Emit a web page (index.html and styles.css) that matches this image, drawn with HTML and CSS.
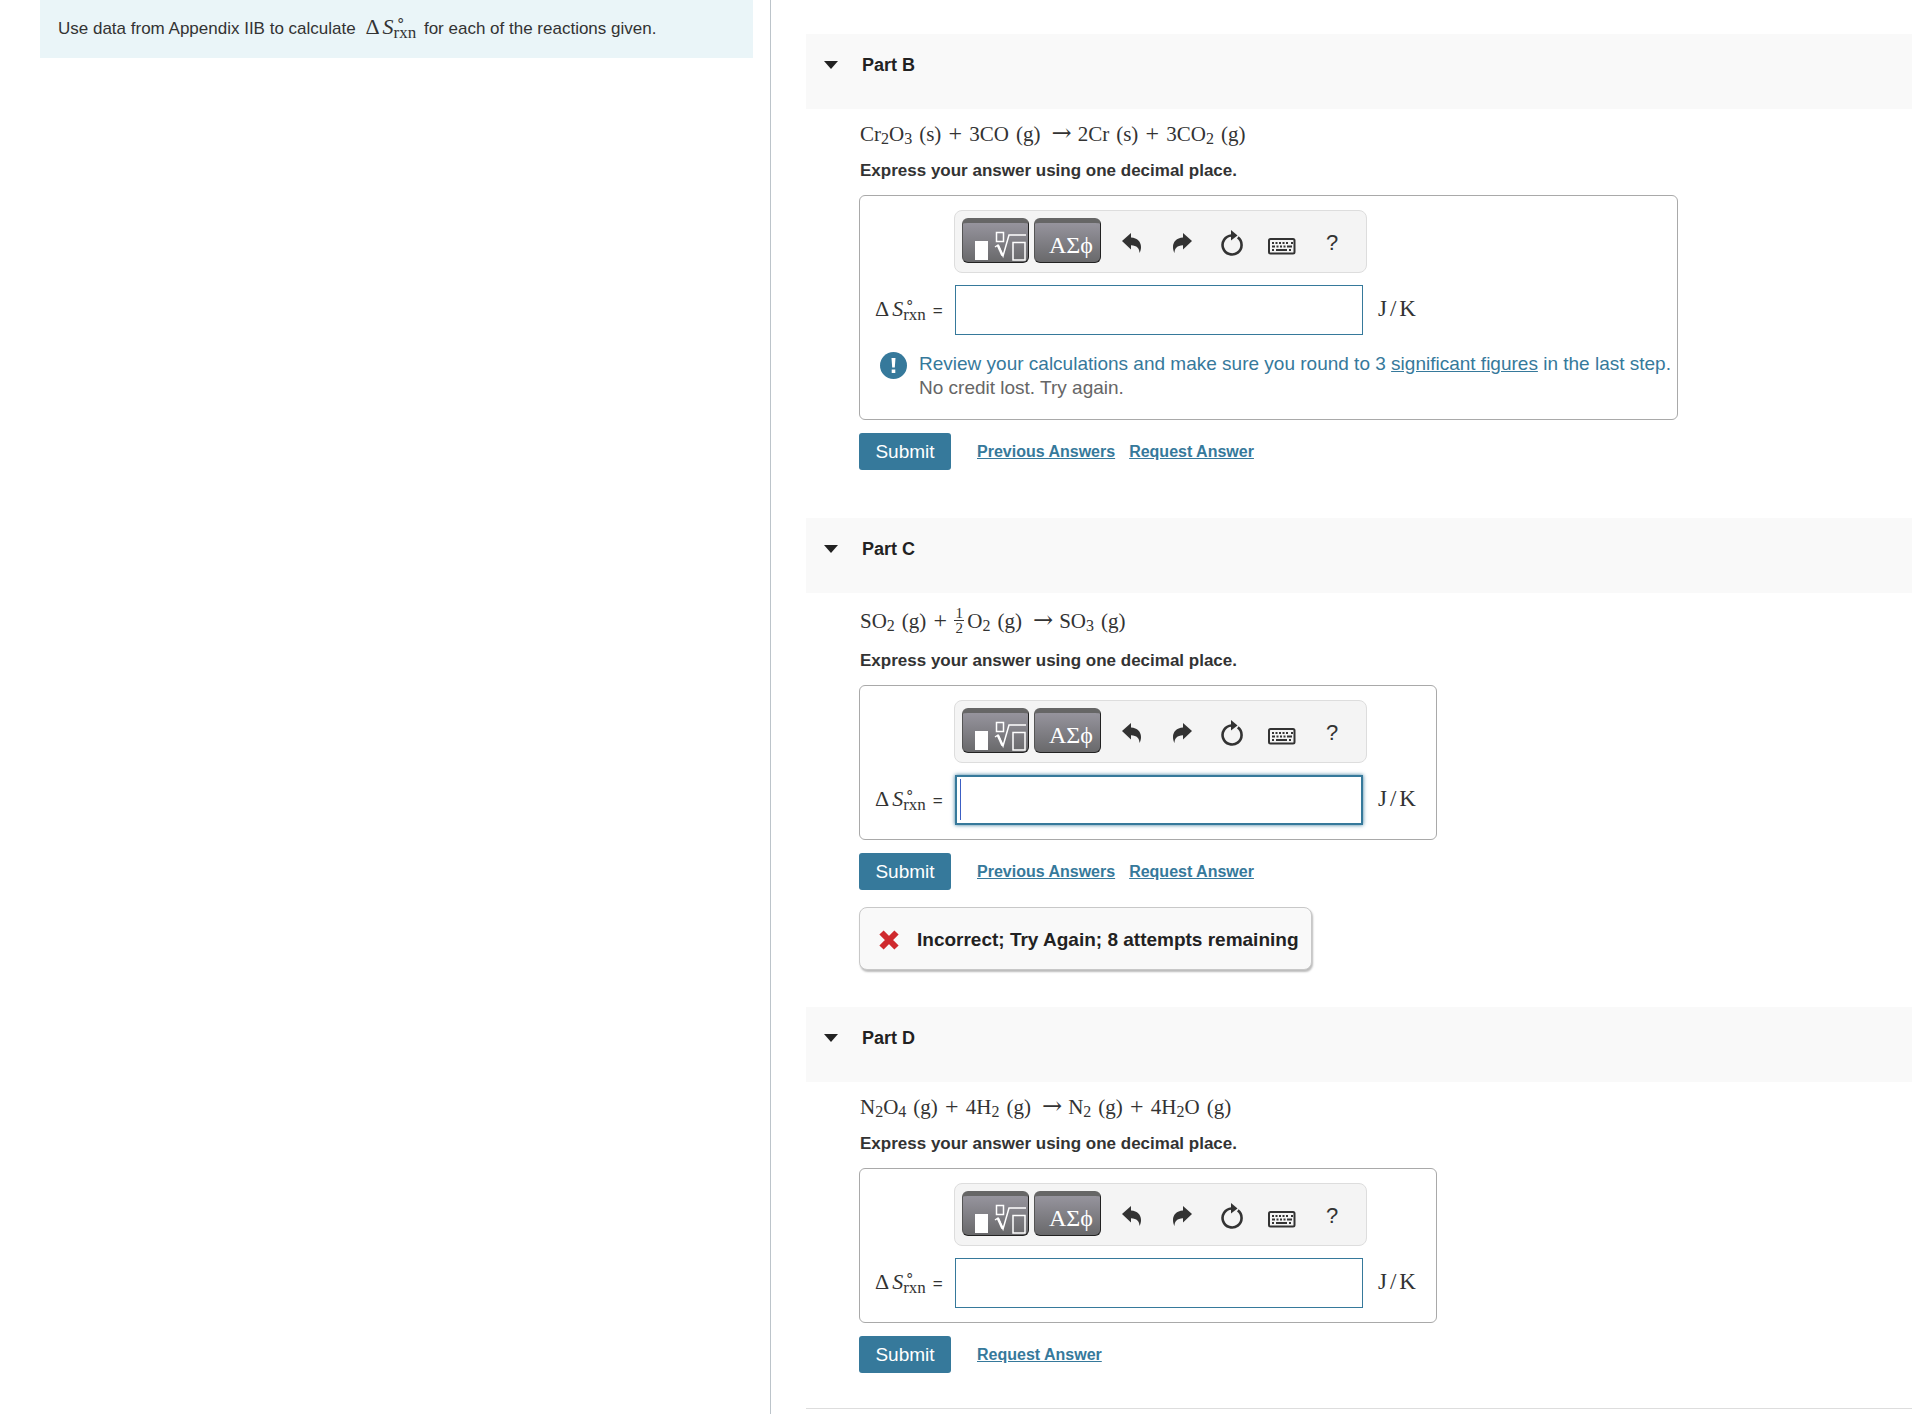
FILE: index.html
```html
<!DOCTYPE html>
<html lang="en">
<head>
<meta charset="utf-8">
<meta name="viewport" content="width=device-width, initial-scale=1">
<title>Standard entropy changes</title>
<link rel="stylesheet" href="styles.css">
</head>
<body>
<svg class="sprite" aria-hidden="true">
  <symbol id="i-template" viewBox="0 0 67 45">
    <path fill="#fff" d="M13 23h13v19H13z"/>
    <path fill="none" stroke="#fff" stroke-width="1.5" d="M34.5 14.5h7v9h-7zM51 24.500h12v17.500h-12z"/>
    <path fill="none" stroke="#fff" stroke-width="1.500" d="M33 29l3-2 5 11 6-21h17"/>
    <path fill="none" stroke="#fff" stroke-width="2.500" d="M36 27.500l4.500 10"/>
  </symbol>
  <symbol id="i-undo" viewBox="0 0 20 20">
    <path d="M0 8L9 0v4.600c6.500.400 10 4.400 10 9.400 0 2.400-.600 4.300-1.500 6-.200-4.600-2.500-7.400-8.500-7.700v4.200z"/>
  </symbol>
  <symbol id="i-redo" viewBox="0 0 20 20">
    <path d="M20 8L11 0v4.600C4.500 5 1 9 1 14c0 2.400.600 4.300 1.500 6 .200-4.600 2.500-7.400 8.500-7.700v4.200z"/>
  </symbol>
  <symbol id="i-reset" viewBox="0 0 24 26">
    <path fill="none" stroke="currentColor" stroke-width="2.600" d="M17.800 7.400A9.500 9.500 0 1 1 11.500 5.500"/>
    <path d="M11 0l6.500 5.500L11 10.500z"/>
  </symbol>
  <symbol id="i-keyboard" viewBox="0 0 28 17">
    <rect x="1" y="1" width="25.500" height="14.500" rx="1.500" fill="none" stroke="currentColor" stroke-width="2"/>
    <path stroke="currentColor" stroke-width="2" d="M4 5h2m1.500 0h2m1.500 0h2m1.500 0h2m1.500 0h2m3 0h2M4 8.500h3m1.500 0h2m1.500 0h2m1.500 0h2m1.500 0h5M4 12h2m2 0h11m2 0h2"/>
  </symbol>
  <symbol id="i-alert" viewBox="0 0 27 27">
    <circle cx="13.500" cy="13.500" r="13.500" fill="#36799b"/>
    <path fill="#fff" d="M11.500 6h4l-.700 9.500h-2.600zM11.700 17.500h3.600V21h-3.600z"/>
  </symbol>
  <symbol id="i-cross" viewBox="0 0 20 20">
    <path fill="none" stroke="#cf2a2e" stroke-width="6" d="M2.500 2.500l15 15m0-15l-15 15"/>
  </symbol>
</svg>

<main class="page">
  <aside class="intro">
    <p class="intro-text">Use data from Appendix IIB to calculate <span class="math symbol"><span>Δ</span><i>S</i><span class="scripts"><span class="deg">∘</span><span>rxn</span></span></span> for each of the reactions given.</p>
  </aside>

  <div class="parts">
    <section class="part">
      <h2 class="part-head"><button type="button" class="toggle" aria-expanded="true"><span class="caret-down"></span>Part B</button></h2>
      <div class="part-body">
        <p class="math equation"><span>Cr<sub>2</sub>O<sub>3</sub></span><span class="state">(s)</span><span class="op">+</span><span>3CO</span><span class="state">(g)</span><span class="arrow">→</span><span>2Cr</span><span class="state">(s)</span><span class="op">+</span><span>3CO<sub>2</sub></span><span class="state">(g)</span></p>
        <p class="hint">Express your answer using one decimal place.</p>
        <div class="answer reviewed">
          <div class="entry">
            <div class="toolbar">
              <button type="button" class="tile" aria-label="Templates"><svg class="tile-art"><use href="#i-template"/></svg></button>
              <button type="button" class="tile greek">ΑΣϕ</button>
              <button type="button" class="tool" aria-label="Undo"><svg width="20" height="20"><use href="#i-undo"/></svg></button>
              <button type="button" class="tool" aria-label="Redo"><svg width="20" height="20"><use href="#i-redo"/></svg></button>
              <button type="button" class="tool" aria-label="Reset"><svg width="24" height="26"><use href="#i-reset"/></svg></button>
              <button type="button" class="tool" aria-label="Keyboard shortcuts"><svg class="keys" width="28" height="17"><use href="#i-keyboard"/></svg></button>
              <button type="button" class="tool" aria-label="Help">?</button>
            </div>
            <label class="name" for="answer-b"><span class="math symbol"><span>Δ</span><i>S</i><span class="scripts"><span class="deg">∘</span><span>rxn</span></span></span> =</label>
            <div class="field"><input id="answer-b" type="text"></div>
            <span class="math unit">J<span class="per">/</span>K</span>
          </div>
          <div class="review">
            <svg width="27" height="27"><use href="#i-alert"/></svg>
            <p>Review your calculations and make sure you round to 3 <a href="#">significant figures</a> in the last step.<br><span class="note">No credit lost. Try again.</span></p>
          </div>
        </div>
        <div class="actions"><button type="button" class="submit">Submit</button><a href="#">Previous Answers</a><a href="#">Request Answer</a></div>
      </div>
    </section>

    <section class="part">
      <h2 class="part-head"><button type="button" class="toggle" aria-expanded="true"><span class="caret-down"></span>Part C</button></h2>
      <div class="part-body with-result">
        <p class="math equation tall"><span>SO<sub>2</sub></span><span class="state">(g)</span><span class="op">+</span><span class="frac"><span>1</span><span class="den">2</span></span><span>O<sub>2</sub></span><span class="state">(g)</span><span class="arrow">→</span><span>SO<sub>3</sub></span><span class="state">(g)</span></p>
        <p class="hint">Express your answer using one decimal place.</p>
        <div class="answer">
          <div class="entry">
            <div class="toolbar">
              <button type="button" class="tile" aria-label="Templates"><svg class="tile-art"><use href="#i-template"/></svg></button>
              <button type="button" class="tile greek">ΑΣϕ</button>
              <button type="button" class="tool" aria-label="Undo"><svg width="20" height="20"><use href="#i-undo"/></svg></button>
              <button type="button" class="tool" aria-label="Redo"><svg width="20" height="20"><use href="#i-redo"/></svg></button>
              <button type="button" class="tool" aria-label="Reset"><svg width="24" height="26"><use href="#i-reset"/></svg></button>
              <button type="button" class="tool" aria-label="Keyboard shortcuts"><svg class="keys" width="28" height="17"><use href="#i-keyboard"/></svg></button>
              <button type="button" class="tool" aria-label="Help">?</button>
            </div>
            <label class="name" for="answer-c"><span class="math symbol"><span>Δ</span><i>S</i><span class="scripts"><span class="deg">∘</span><span>rxn</span></span></span> =</label>
            <div class="field active"><input id="answer-c" type="text"></div>
            <span class="math unit">J<span class="per">/</span>K</span>
          </div>
        </div>
        <div class="actions"><button type="button" class="submit">Submit</button><a href="#">Previous Answers</a><a href="#">Request Answer</a></div>
        <p class="result"><svg width="20" height="20"><use href="#i-cross"/></svg>Incorrect; Try Again; 8 attempts remaining</p>
      </div>
    </section>

    <section class="part">
      <h2 class="part-head"><button type="button" class="toggle" aria-expanded="true"><span class="caret-down"></span>Part D</button></h2>
      <div class="part-body last">
        <p class="math equation"><span>N<sub>2</sub>O<sub>4</sub></span><span class="state">(g)</span><span class="op">+</span><span>4H<sub>2</sub></span><span class="state">(g)</span><span class="arrow">→</span><span>N<sub>2</sub></span><span class="state">(g)</span><span class="op">+</span><span>4H<sub>2</sub>O</span><span class="state">(g)</span></p>
        <p class="hint">Express your answer using one decimal place.</p>
        <div class="answer">
          <div class="entry">
            <div class="toolbar">
              <button type="button" class="tile" aria-label="Templates"><svg class="tile-art"><use href="#i-template"/></svg></button>
              <button type="button" class="tile greek">ΑΣϕ</button>
              <button type="button" class="tool" aria-label="Undo"><svg width="20" height="20"><use href="#i-undo"/></svg></button>
              <button type="button" class="tool" aria-label="Redo"><svg width="20" height="20"><use href="#i-redo"/></svg></button>
              <button type="button" class="tool" aria-label="Reset"><svg width="24" height="26"><use href="#i-reset"/></svg></button>
              <button type="button" class="tool" aria-label="Keyboard shortcuts"><svg class="keys" width="28" height="17"><use href="#i-keyboard"/></svg></button>
              <button type="button" class="tool" aria-label="Help">?</button>
            </div>
            <label class="name" for="answer-d"><span class="math symbol"><span>Δ</span><i>S</i><span class="scripts"><span class="deg">∘</span><span>rxn</span></span></span> =</label>
            <div class="field"><input id="answer-d" type="text"></div>
            <span class="math unit">J<span class="per">/</span>K</span>
          </div>
        </div>
        <div class="actions"><button type="button" class="submit">Submit</button><a href="#">Request Answer</a></div>
      </div>
    </section>
  </div>
</main>
</body>
</html>
```

FILE: styles.css
```css
* { box-sizing: border-box; }

body {
  margin: 0;
  background: #fff;
  color: #333;
  font-family: "Liberation Sans", Arial, sans-serif;
  font-size: 17px;
  line-height: 20px;
}

p, h2 { margin: 0; }
button { padding: 0; border: 0; background: none; color: inherit; font: inherit; cursor: pointer; }
a { color: #36799b; }
svg { display: block; fill: currentColor; flex: none; }
.sprite { position: absolute; width: 0; height: 0; }

.page {
  display: grid;
  grid-template-columns: minmax(0, 771fr) minmax(0, 1141fr);
  min-height: 100vh;
}

.intro { padding: 0 17px 0 40px; border-right: 1px solid #bcc4ca; }
.intro-text { padding: 15px 18px 17px; background: #eaf5f8; line-height: 24px; }
.intro-text .symbol { margin: 0 3px 0 5px; }

.parts { padding: 34px 0 0 35px; }

.part-head { height: 75px; padding: 20px 18px; background: #f9f9f9; font-size: 18px; line-height: 22px; }
.toggle { display: flex; align-items: center; gap: 24px; color: #222; font-weight: bold; }
.caret-down { border: 7px solid transparent; border-top: 8px solid #222; border-bottom: 0; }

.part-body { padding: 13px 20px 48px 53px; }
.with-result { padding-bottom: 37px; }
.last { padding-bottom: 35px; }
.parts .part:last-child { border-bottom: 1px solid #ddd; }

/* Chemistry and maths notation */
.math { font-family: "Liberation Serif", "Times New Roman", serif; font-size: 21px; line-height: 24px; }
.equation { display: flex; align-items: baseline; height: 24px; padding-left: 1px; }
.equation.tall { height: 30px; padding-top: 3px; }
.equation sub { font-size: 16px; line-height: 0; vertical-align: -3px; }
.state { margin-left: 7px; }
.op { width: 28px; font-size: 24px; line-height: 0; text-align: center; }
.arrow { margin: 0 6px 0 11px; font-family: "DejaVu Serif", serif; font-size: 24px; line-height: 0; }
.frac { display: inline-flex; flex-direction: column; width: 10px; height: 28px; align-self: flex-start; margin: -3px 3px 0 0; font-size: 15px; line-height: 14px; text-align: center; }
.den { border-top: 1px solid #333; }
.symbol { display: inline-flex; align-items: baseline; gap: 3px; height: 24px; font-size: 22px; }
.scripts { display: inline-flex; flex-direction: column; align-self: flex-start; height: 24px; margin-left: -3px; font-size: 17px; line-height: 14px; }
.deg { height: 11px; padding-left: 2px; font-size: 15px; line-height: 11px; }

.hint { margin: 15px 0 14px; padding-left: 1px; font-weight: bold; }

/* Answer box */
.answer { width: fit-content; padding: 14px 20px 14px 15px; border: 1px solid #a9a9a9; border-radius: 6px; }
.reviewed { padding-right: 6px; }
.entry { display: grid; grid-template-columns: 79px 413px auto; row-gap: 12px; align-items: center; justify-content: start; }
.toolbar { grid-column: 2; display: flex; height: 63px; padding: 7px; border: 1px solid #ddd; border-radius: 8px; background: #f4f4f4; }
.tile {
  width: 67px;
  height: 45px;
  margin-right: 5px;
  border: 1px solid #555;
  border-top: 5px solid #666;
  border-right-color: #222;
  border-bottom-color: #222;
  border-radius: 6px;
  background: linear-gradient(#96949d, #69696b);
  color: #fff;
}
.tile-art { width: 67px; height: 45px; margin: -5px 0 0 -1px; }
.greek { padding: 4px 0 0 7px; font-family: "Liberation Serif", "DejaVu Serif", serif; font-size: 24px; line-height: 30px; }
.tool { display: grid; place-items: center; width: 50px; height: 47px; padding: 2px 0 0 2px; font-size: 22px; }
.keys { margin-top: 7px; }
.name { grid-column: 1; display: flex; align-items: baseline; gap: 7px; padding-bottom: 2px; }
.field { position: relative; padding: 0 4px 0 1px; }
.field input { display: block; width: 100%; height: 50px; padding: 0 6px; border: 1px solid #36799b; background: #fff; font: inherit; outline: 0; }
.active input { border-width: 2px; box-shadow: 0 0 4px #36799b; }
.active::after { content: ""; position: absolute; top: 4px; left: 6px; width: 1px; height: 41px; background: #3c5fc4; }
.unit { margin-left: 11px; padding-bottom: 3px; font-size: 23px; }
.per { margin: 0 3px; }

.review { display: flex; gap: 12px; margin-top: 17px; padding: 0 0 5px 5px; color: #36799b; font-size: 19px; line-height: 24px; }
.note { color: #666; }

.actions { display: flex; align-items: center; gap: 14px; margin-top: 13px; font-size: 16px; font-weight: bold; }
.submit { width: 92px; height: 37px; margin-right: 12px; border-radius: 3px; background: #36799b; color: #fff; font-size: 19px; font-weight: normal; }

.result {
  display: flex;
  align-items: center;
  gap: 18px;
  width: fit-content;
  height: 63px;
  margin-top: 17px;
  padding: 2px 12px 0 19px;
  border: 1px solid #c8c8c8;
  border-radius: 8px;
  background: #f9f9f9;
  box-shadow: 1px 2px 2px #bbb;
  color: #222;
  font-size: 19px;
  font-weight: bold;
}
```
